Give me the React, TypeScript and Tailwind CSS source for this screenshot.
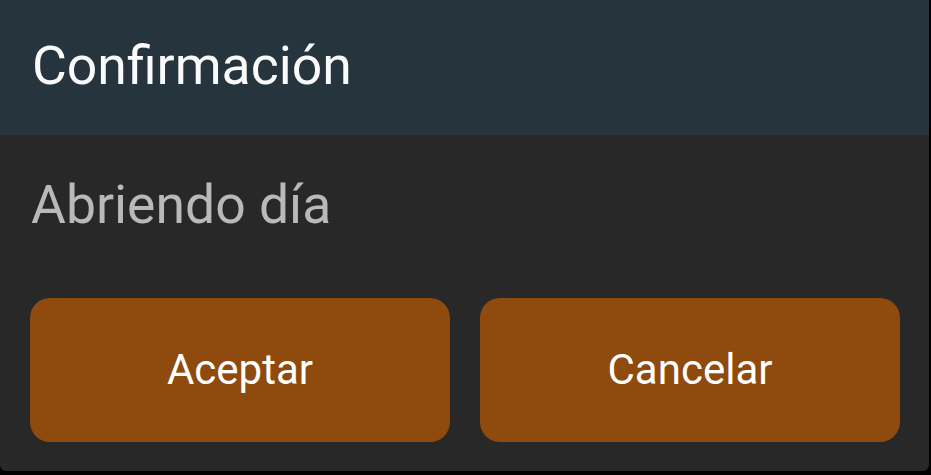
import React from "react";

export default function App() {
  return (
    <div className="w-[931px] h-[475px] bg-black overflow-hidden" style={{ fontFamily: "Roboto, 'Noto Sans', sans-serif" }}>
      <div className="w-[929px] h-[471px] bg-[#282828] rounded-b-[6px] overflow-hidden flex flex-col">
        <div className="h-[135px] bg-[#25343d] px-[32px] pt-[34px]">
          <div className="text-[53.5px] leading-[64px] text-[#fafafa]">Confirmación</div>
        </div>
        <div className="px-[31px] pt-[38px]">
          <div className="text-[53.5px] leading-[64px] text-[#b9b9b9]">Abriendo día</div>
        </div>
        <div className="flex gap-[30px] px-[30px] pr-[29px] mt-[61px]">
          <button className="flex-1 h-[144px] rounded-[20px] bg-[#8f4a0d] text-white text-[42px] leading-none flex items-center justify-center">
            Aceptar
          </button>
          <button className="flex-1 h-[144px] rounded-[20px] bg-[#8f4a0d] text-white text-[42px] leading-none flex items-center justify-center">
            Cancelar
          </button>
        </div>
      </div>
    </div>
  );
}
